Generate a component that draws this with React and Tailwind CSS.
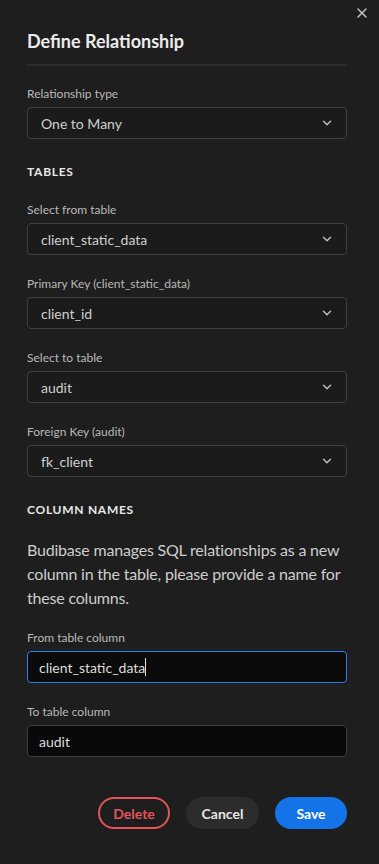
import { X, ChevronDown } from 'lucide-react';

const font = { fontFamily: '"Source Sans Pro", Lato, "Noto Sans", sans-serif' };

function Label({ children }) {
  return <label className="block text-[12px] leading-[16px] text-[#b9b9b9] mb-[5px]">{children}</label>;
}

function Select({ label, value }) {
  return (
    <div>
      <Label>{label}</Label>
      <div className="flex items-center justify-between h-[32px] pl-[13px] pr-[12px] border border-[#3f3f3f] rounded-[4px] bg-[#1b1b1b]">
        <span className="text-[14px] text-[#cfcfcf]">{value}</span>
        <ChevronDown className="w-[14px] h-[14px] text-[#bdbdbd]" strokeWidth={2.5} />
      </div>
    </div>
  );
}

function Heading({ children }) {
  return <h3 className="text-[12px] leading-[16px] font-bold tracking-[0.06em] text-[#e8e8e8] uppercase">{children}</h3>;
}

export default function App() {
  return (
    <div className="relative min-h-[864px] w-[379px] bg-[#1e1e1e] pl-[27px] pr-[32px] pt-[29px]" style={font}>
      <button type="button" className="absolute right-[9px] top-[5px] text-[#c8c8c8]">
        <X className="w-[16px] h-[16px]" strokeWidth={2} />
      </button>

      <h2 className="text-[18px] leading-[24px] font-bold text-[#ececec]">Define Relationship</h2>
      <div className="mt-[11px] h-[2px] bg-[#2c2c2c]" />

      <div className="mt-[20px]">
        <Select label="Relationship type" value="One to Many" />
      </div>

      <div className="mt-[25px]">
        <Heading>Tables</Heading>
      </div>

      <div className="mt-[22px] flex flex-col gap-[21px]">
        <Select label="Select from table" value="client_static_data" />
        <Select label="Primary Key (client_static_data)" value="client_id" />
        <Select label="Select to table" value="audit" />
        <Select label="Foreign Key (audit)" value="fk_client" />
      </div>

      <div className="mt-[25px]">
        <Heading>Column names</Heading>
      </div>

      <p className="mt-[20px] text-[16px] leading-[24px] tracking-[-0.2px] text-[#cdcdcd]">
        Budibase manages SQL relationships as a new column in the table, please provide a name for these columns.
      </p>

      <div className="mt-[20px]">
        <Label>From table column</Label>
        <div className="flex items-center h-[32px] px-[11px] border border-[#2680eb] rounded-[4px] bg-[#0b0b0b]">
          <span className="text-[14px] text-[#dcdcdc]">client_static_data</span>
          <span className="w-[1px] h-[18px] bg-[#e0e0e0]" />
        </div>
      </div>

      <div className="mt-[21px]">
        <Label>To table column</Label>
        <div className="flex items-center h-[32px] px-[11px] border border-[#3f3f3f] rounded-[4px] bg-[#090909]">
          <span className="text-[14px] text-[#dcdcdc]">audit</span>
        </div>
      </div>

      <div className="mt-[40px] flex justify-end gap-[16px]">
        <button type="button" className="h-[32px] w-[72px] rounded-full border-2 border-[#e5535b] text-[14px] font-bold text-[#e5535b]">
          Delete
        </button>
        <button type="button" className="h-[32px] w-[73px] rounded-full bg-[#2c2c2c] text-[14px] font-bold text-[#e6e6e6]">
          Cancel
        </button>
        <button type="button" className="h-[32px] w-[72px] rounded-full bg-[#1473e6] text-[14px] font-bold text-white">
          Save
        </button>
      </div>
    </div>
  );
}
